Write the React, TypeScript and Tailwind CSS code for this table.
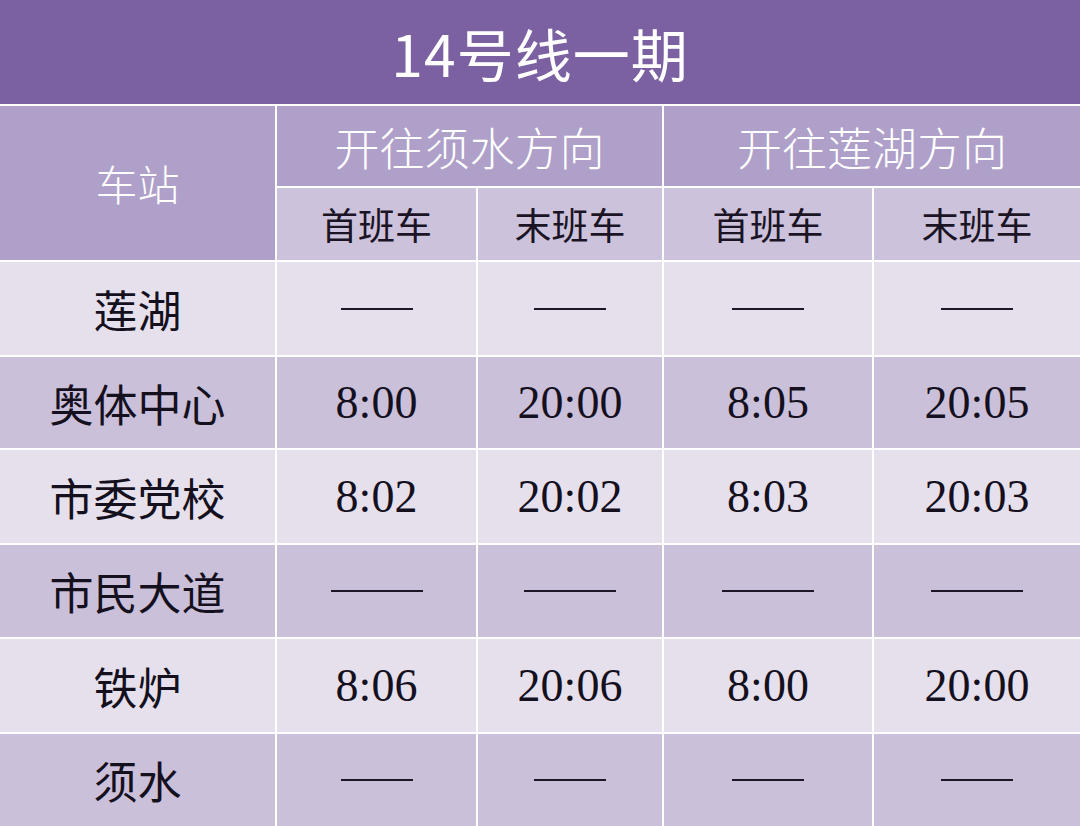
const rows = [
  { name: '莲湖', cells: ['——', '——', '——', '——'], dark: false },
  { name: '奥体中心', cells: ['8:00', '20:00', '8:05', '20:05'], dark: true },
  { name: '市委党校', cells: ['8:02', '20:02', '8:03', '20:03'], dark: false },
  { name: '市民大道', cells: ['——', '——', '——', '——'], dark: true, long: true },
  { name: '铁炉', cells: ['8:06', '20:06', '8:00', '20:00'], dark: false },
  { name: '须水', cells: ['——', '——', '——', '——'], dark: true },
];

const cjk = "font-['Noto_Sans_CJK_SC',sans-serif]";

function Cell({ value, dark, long }: { value: string; dark: boolean; long?: boolean }) {
  const bg = dark ? 'bg-[#cbc0da]' : 'bg-[#e5e0ec]';
  if (value === '——') {
    return (
      <div className={`${bg} flex items-center justify-center`}>
        <span className={`block h-[2px] ${long ? 'w-[92px]' : 'w-[72px]'} bg-[#1c1626]`} />
      </div>
    );
  }
  return (
    <div className={`${bg} flex items-center justify-center`}>
      <span className="inline-block font-['Liberation_Serif',serif] text-[46px] leading-none text-[#15101e]">
        {value}
      </span>
    </div>
  );
}

export default function App() {
  return (
    <div className="w-[1080px] h-[826px] bg-white overflow-hidden">
      <div className="h-[104px] bg-[#7c61a2] flex items-center justify-center">
        <h1 className={`${cjk} text-[57px] text-white tracking-[1px] leading-none`}>14号线一期</h1>
      </div>
      <div className="mt-[2px] grid grid-cols-[275px_199px_184px_208px_206px] grid-rows-[80px_72px_93px_91px_93px_92px_93px_92px] gap-[2px]">
        <div className="row-span-2 bg-[#afa0c9] flex items-center justify-center">
          <span className={`${cjk} font-light text-[42px] text-white leading-none`}>车站</span>
        </div>
        <div className="col-span-2 bg-[#afa0c9] flex items-center justify-center">
          <span className={`${cjk} font-light text-[45px] text-white leading-none`}>开往须水方向</span>
        </div>
        <div className="col-span-2 bg-[#afa0c9] flex items-center justify-center">
          <span className={`${cjk} font-light text-[45px] text-white leading-none`}>开往莲湖方向</span>
        </div>
        {['首班车', '末班车', '首班车', '末班车'].map((t, i) => (
          <div key={i} className="bg-[#cdc2dc] flex items-center justify-center">
            <span className={`${cjk} text-[37px] text-[#1a1424] leading-none`}>{t}</span>
          </div>
        ))}
        {rows.map((r) => (
          <>
            <div key={r.name} className={`${r.dark ? 'bg-[#cbc0da]' : 'bg-[#e5e0ec]'} flex items-center justify-center`}>
              <span className={`${cjk} text-[44px] text-[#15101e] leading-none`}>{r.name}</span>
            </div>
            {r.cells.map((c, i) => (
              <Cell key={r.name + i} value={c} dark={r.dark} long={r.long} />
            ))}
          </>
        ))}
      </div>
    </div>
  );
}
